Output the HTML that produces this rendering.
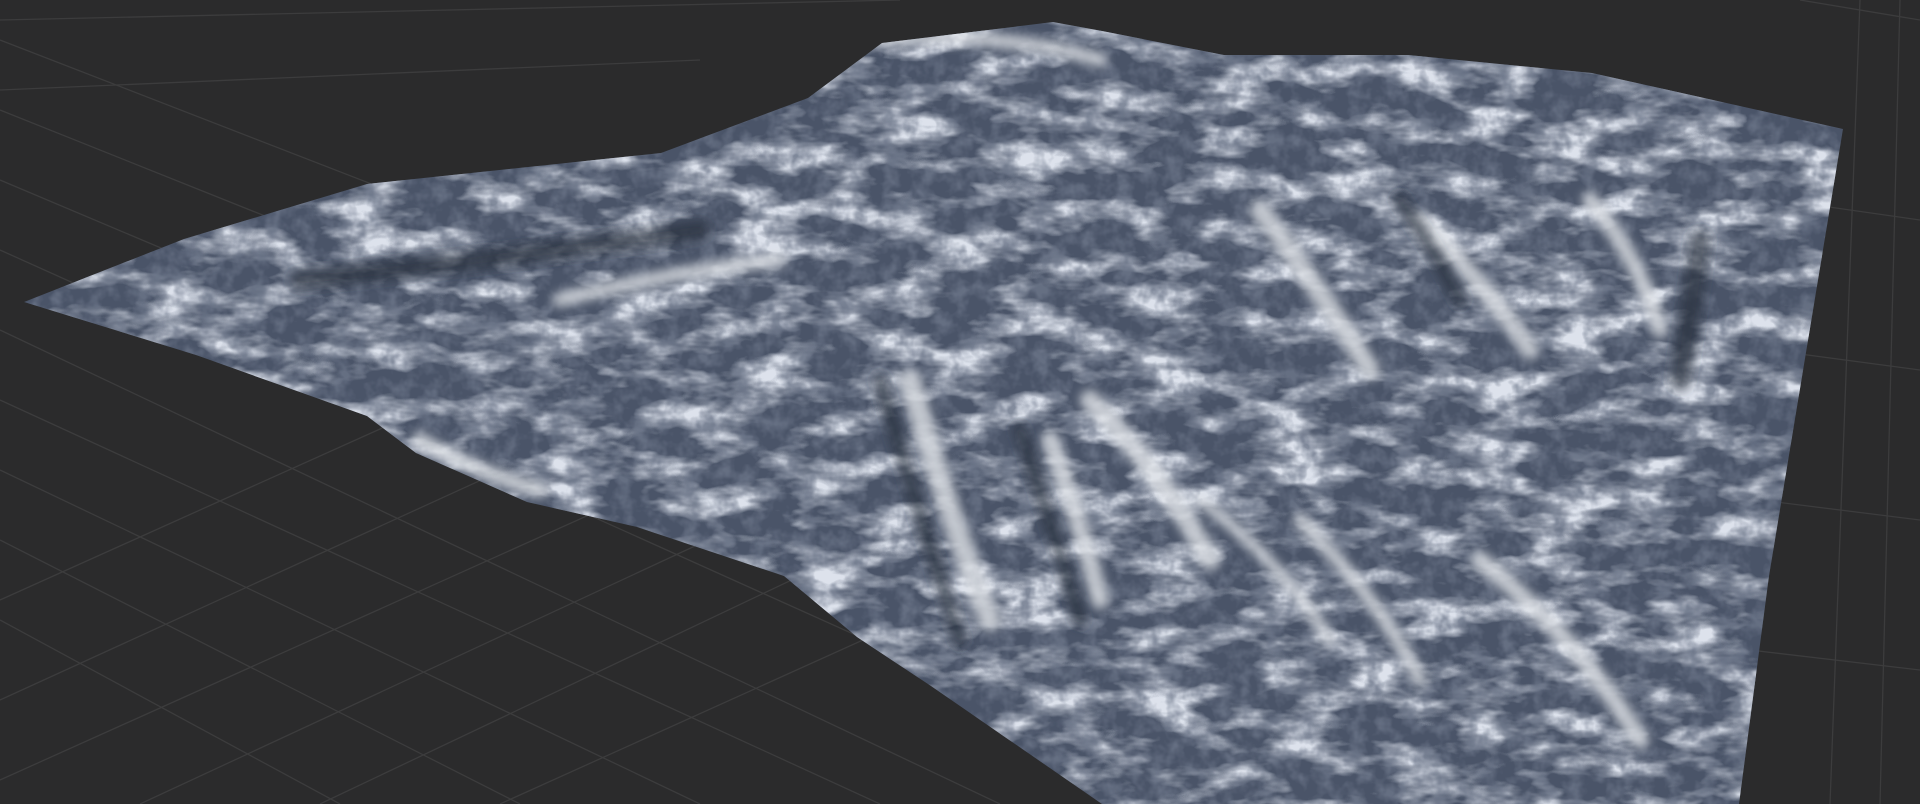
<!DOCTYPE html>
<html><head><meta charset="utf-8"><style>
html,body{margin:0;padding:0;background:#2b2b2c;overflow:hidden}
svg{display:block}
</style></head><body>
<svg width="1920" height="804" viewBox="0 0 1920 804" xmlns="http://www.w3.org/2000/svg">
<defs>
<filter id="tex" x="0" y="0" width="100%" height="100%">
<feTurbulence type="fractalNoise" baseFrequency="0.015 0.035" numOctaves="4" seed="7" result="n"/>
<feColorMatrix in="n" type="matrix" values="0 0 0 0 0.72  0 0 0 0 0.76  0 0 0 0 0.84  3.5 0 0 0 -1.55" result="c"/>
<feComposite in="c" in2="SourceGraphic" operator="in"/>
</filter>
<filter id="tex2" x="0" y="0" width="100%" height="100%">
<feTurbulence type="fractalNoise" baseFrequency="0.06" numOctaves="3" seed="3" result="n"/>
<feColorMatrix in="n" type="matrix" values="0 0 0 0 0.15  0 0 0 0 0.18  0 0 0 0 0.25  2.5 0 0 0 -1.0" result="c"/>
<feComposite in="c" in2="SourceGraphic" operator="in"/>
</filter>
<filter id="blur"><feGaussianBlur stdDeviation="5"/></filter>
<clipPath id="terr"><polygon id="tp" points="24,302 184,239 367,184 661,153 808,98 882,43 980,31 1053,22 1102,31 1224,55 1408,55 1592,73 1843,129 1769,576 1739,804 1102,804 931,686 857,637 784,576 637,527 527,502 416,453 367,416 196,355"/></clipPath>
</defs>
<g stroke="#3c3c3d" stroke-width="1.3" fill="none">
<line x1="0" y1="470" x2="700" y2="804"/><line x1="0" y1="540" x2="520" y2="804"/><line x1="0" y1="620" x2="340" y2="804"/><line x1="0" y1="400" x2="880" y2="804"/><line x1="0" y1="330" x2="1000" y2="804"/>
<line x1="0" y1="250" x2="1000" y2="700"/><line x1="0" y1="180" x2="900" y2="560"/><line x1="0" y1="110" x2="900" y2="470"/><line x1="0" y1="40" x2="800" y2="350"/>
<line x1="0" y1="700" x2="700" y2="380"/><line x1="0" y1="600" x2="600" y2="330"/><line x1="0" y1="780" x2="800" y2="420"/><line x1="140" y1="804" x2="880" y2="460"/><line x1="320" y1="804" x2="960" y2="500"/><line x1="500" y1="804" x2="1040" y2="560"/>
<line x1="1800" y1="0" x2="1920" y2="20"/><line x1="1780" y1="200" x2="1920" y2="220"/><line x1="1770" y1="350" x2="1920" y2="370"/><line x1="1760" y1="500" x2="1920" y2="520"/><line x1="1750" y1="650" x2="1920" y2="670"/>
<line x1="1860" y1="0" x2="1830" y2="804"/><line x1="1900" y1="0" x2="1880" y2="804"/>
<line x1="0" y1="20" x2="900" y2="0"/><line x1="0" y1="90" x2="700" y2="60"/>
</g>
<use href="#tp" fill="#4a5468"/>
<g clip-path="url(#terr)">
<rect width="1920" height="804" fill="#4a5468" filter="url(#tex)"/>
<rect width="1920" height="804" fill="#000" filter="url(#tex2)" opacity="0.8"/>
<g stroke="#dfe2e6" stroke-linecap="round" filter="url(#blur)" opacity="0.8" fill="none">
<path d="M910 380 Q950 520 990 620" stroke-width="22"/>
<path d="M1050 440 Q1080 520 1100 600" stroke-width="18"/>
<path d="M1090 400 Q1160 470 1210 560" stroke-width="20"/>
<path d="M1260 210 Q1320 290 1370 370" stroke-width="20"/>
<path d="M1420 220 Q1490 290 1530 350" stroke-width="18"/>
<path d="M1590 200 Q1640 260 1660 330" stroke-width="16"/>
<path d="M1480 560 Q1580 640 1640 740" stroke-width="18"/>
<path d="M1300 520 Q1380 600 1420 680" stroke-width="14"/>
<path d="M420 440 Q470 470 540 490" stroke-width="16"/>
<path d="M560 300 Q680 270 780 260" stroke-width="14"/>
<path d="M860 40 Q1000 30 1100 60" stroke-width="14"/>
<path d="M1200 500 Q1280 560 1330 640" stroke-width="12"/>
</g>
<g stroke="#262d3a" stroke-linecap="round" filter="url(#blur)" opacity="0.65" fill="none">
<path d="M880 380 Q920 520 960 640" stroke-width="14"/>
<path d="M1020 430 Q1050 520 1080 620" stroke-width="14"/>
<path d="M1700 240 Q1690 320 1680 380" stroke-width="22"/>
<path d="M1400 200 Q1440 260 1460 300" stroke-width="14"/>
<path d="M300 280 Q500 260 700 230" stroke-width="20"/>
</g>
</g>
</svg>
</body></html>
